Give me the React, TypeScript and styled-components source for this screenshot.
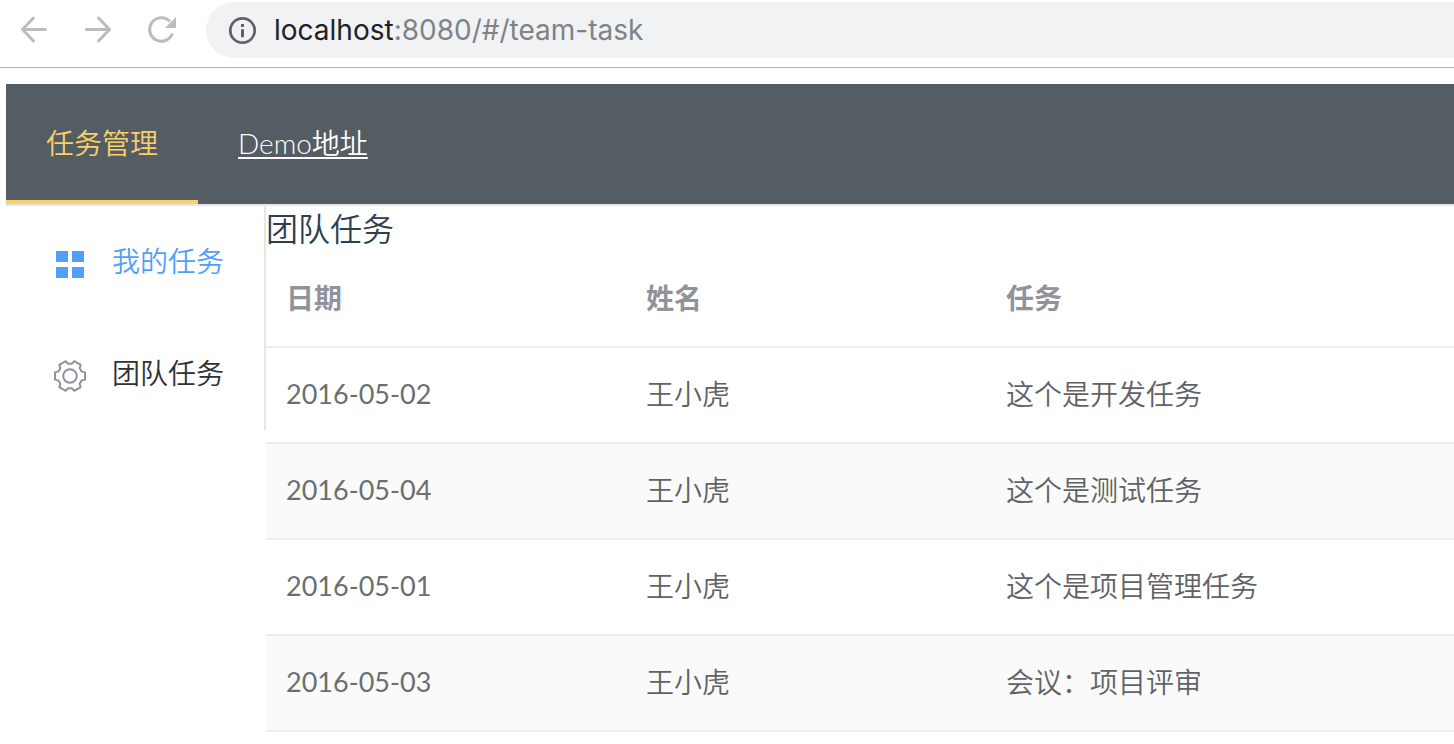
import React from "react";
import styled, { createGlobalStyle } from "styled-components";

const GlobalStyle = createGlobalStyle`
  * { box-sizing: border-box; }
  body {
    margin: 0;
    background: #ffffff;
    font-family: Lato, "Noto Sans CJK SC", sans-serif;
    font-size: 28px;
    font-weight: 350;
    overflow-x: hidden;
  }
`;

const BrowserBar = styled.header`
  display: flex;
  align-items: center;
  height: 68px;
  padding: 2px 0 10px 18px;
  border-bottom: 1px solid #b4b6b8;
`;

const ToolButton = styled.button`
  display: flex;
  width: 32px;
  height: 32px;
  margin-right: 32px;
  padding: 0;
  border: 0;
  background: none;
  color: #bbbcbd;
`;

const AddressBar = styled.div`
  display: flex;
  flex: 1;
  align-items: center;
  gap: 16px;
  height: 56px;
  margin-left: -4px;
  padding-left: 22px;
  border-radius: 28px 0 0 28px;
  background: #f1f2f4;
  font-family: Inter, sans-serif;
  font-weight: 400;
  color: #808386;
`;

const Host = styled.span`
  color: #202124;
`;

const Page = styled.div`
  padding: 16px 0 12px 6px;
`;

const TopNav = styled.nav`
  display: flex;
  height: 122px;
  border-bottom: 2px solid #e6e6e6;
  background: #545c64;
  background-clip: padding-box;
`;

const TopLink = styled.a<{ $active?: boolean }>`
  display: flex;
  align-items: center;
  padding: 0 40px;
  border-bottom: 4px solid ${(p) => (p.$active ? "#f9d06a" : "transparent")};
  color: ${(p) => (p.$active ? "#f9d06a" : "#ffffff")};
  text-decoration: ${(p) => (p.$active ? "none" : "underline")};
  text-decoration-thickness: 2px;
  text-underline-offset: 3px;
`;

const Body = styled.div`
  display: flex;
  align-items: flex-start;
`;

const SideNav = styled.nav`
  flex: 0 0 260px;
  border-right: 2px solid #e6e6e6;
`;

const SideLink = styled.a<{ $active?: boolean }>`
  display: flex;
  align-items: center;
  gap: 24px;
  height: 112px;
  padding: 0 0 4px 46px;
  color: ${(p) => (p.$active ? "#529ff8" : "#303133")};
  text-decoration: none;

  svg {
    flex: none;
    margin-top: 8px;
    color: ${(p) => (p.$active ? "#529ff8" : "#909399")};
  }
`;

const Main = styled.main`
  flex: 1;
  min-width: 0;
`;

const Title = styled.h1`
  margin: 0;
  color: #2c3e50;
  font-size: 32px;
  font-weight: 350;
  line-height: 46px;
`;

const TaskTable = styled.table`
  width: 100%;
  table-layout: fixed;
  border-collapse: separate;
  border-spacing: 0;
  color: #606266;
`;

const HeadCell = styled.th<{ $wide?: boolean }>`
  width: ${(p) => (p.$wide ? "auto" : "360px")};
  height: 96px;
  padding: 0 20px 4px;
  border-bottom: 2px solid #ebeef5;
  color: #909399;
  font-weight: 700;
  text-align: left;
`;

const Row = styled.tr`
  &:nth-child(even) {
    background: #fafafa;
  }
`;

const Cell = styled.td`
  height: 96px;
  padding: 0 20px 4px;
  border-bottom: 2px solid #ebeef5;
`;

const DateCell = styled(Cell)`
  color: #6c6e72;
  font-size: 27px;
  font-weight: 400;
`;

const BackIcon = () => (
  <svg width="32" height="32" viewBox="0 0 32 32" fill="none" stroke="currentColor" strokeWidth="3" strokeLinecap="round" strokeLinejoin="round">
    <path d="M27.500 15.500H4.500M15.500 4L4.500 15.500L15.500 27" />
  </svg>
);

const ForwardIcon = () => (
  <svg width="32" height="32" viewBox="0 0 32 32" fill="none" stroke="currentColor" strokeWidth="3" strokeLinecap="round" strokeLinejoin="round">
    <path d="M4.500 15.500H27.500M16.500 4L27.500 15.500L16.500 27" />
  </svg>
);

const ReloadIcon = () => (
  <svg width="32" height="32" viewBox="0 0 32 32" fill="none">
    <path d="M26.400 19.500A11.700 11.700 0 1 1 24 7.600" stroke="currentColor" strokeWidth="3" />
    <path d="M30 3V14H19Z" fill="currentColor" />
  </svg>
);

const InfoIcon = () => (
  <svg width="30" height="30" viewBox="0 0 30 30" fill="none">
    <circle cx="14.500" cy="15.500" r="12.200" stroke="#5f6368" strokeWidth="2.800" />
    <path d="M13 14.300h3v8h-3zM13 9h3v3h-3z" fill="#5f6368" />
  </svg>
);

const GridIcon = () => (
  <svg width="36" height="36" viewBox="0 0 36 36" fill="currentColor">
    <path d="M4 5h12v11H4zM20 5h12v11H20zM4 21h12v11H4zM20 21h12v11H20z" />
  </svg>
);

const gearPoints = [0, 60, 120, 180, 240, 300]
  .flatMap((deg) => {
    const a = (deg * Math.PI) / 180;
    return [[11.5, -4.6], [15, -3.6], [15, 3.6], [11.5, 4.6]].map(([x, y]) =>
      [18 + x * Math.cos(a) - y * Math.sin(a), 18 + x * Math.sin(a) + y * Math.cos(a)]
        .map((n) => n.toFixed(2))
        .join(",")
    );
  })
  .join(" ");

const GearIcon = () => (
  <svg width="36" height="36" viewBox="0 0 36 36" fill="none" stroke="currentColor" strokeWidth="2">
    <polygon points={gearPoints} />
    <circle cx="18" cy="18" r="6.800" />
  </svg>
);

const tasks = [
  { date: "2016-05-02", name: "王小虎", task: "这个是开发任务" },
  { date: "2016-05-04", name: "王小虎", task: "这个是测试任务" },
  { date: "2016-05-01", name: "王小虎", task: "这个是项目管理任务" },
  { date: "2016-05-03", name: "王小虎", task: "会议：项目评审" },
];

export default function App() {
  return (
    <>
      <GlobalStyle />
      <BrowserBar>
        <ToolButton aria-label="Back"><BackIcon /></ToolButton>
        <ToolButton aria-label="Forward"><ForwardIcon /></ToolButton>
        <ToolButton aria-label="Reload"><ReloadIcon /></ToolButton>
        <AddressBar>
          <InfoIcon />
          <span><Host>localhost</Host>:8080/#/team-task</span>
        </AddressBar>
      </BrowserBar>
      <Page>
        <TopNav>
          <TopLink href="#/" $active>任务管理</TopLink>
          <TopLink href="#/demo">Demo地址</TopLink>
        </TopNav>
        <Body>
          <SideNav>
            <SideLink href="#/my-task" $active><GridIcon />我的任务</SideLink>
            <SideLink href="#/team-task"><GearIcon />团队任务</SideLink>
          </SideNav>
          <Main>
            <Title>团队任务</Title>
            <TaskTable>
              <thead>
                <tr>
                  <HeadCell scope="col">日期</HeadCell>
                  <HeadCell scope="col">姓名</HeadCell>
                  <HeadCell scope="col" $wide>任务</HeadCell>
                </tr>
              </thead>
              <tbody>
                {tasks.map((t) => (
                  <Row key={t.date}>
                    <DateCell>{t.date}</DateCell>
                    <Cell>{t.name}</Cell>
                    <Cell>{t.task}</Cell>
                  </Row>
                ))}
              </tbody>
            </TaskTable>
          </Main>
        </Body>
      </Page>
    </>
  );
}
